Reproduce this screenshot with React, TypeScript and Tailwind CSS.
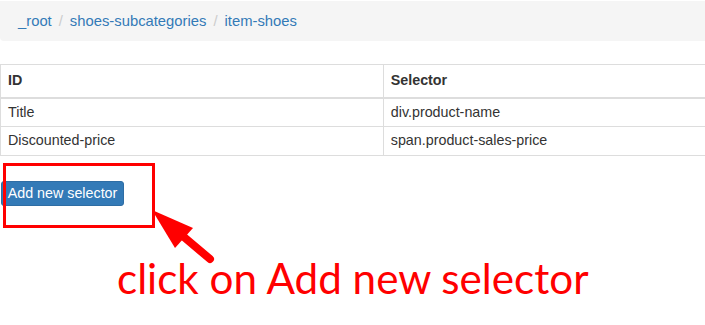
import React from 'react'

// ── Data ───────────────────────────────────────────────────────────────────────
const CRUMBS = ['_root', 'shoes-subcategories', 'item-shoes']

const ROWS = [
    { id: 'Title',            selector: 'div.product-name' },
    { id: 'Discounted-price', selector: 'span.product-sales-price' },
]

// ── Annotation arrow ───────────────────────────────────────────────────────────
function Arrow() {
    return (
        <svg className="absolute left-[140px] top-[200px]" width="80" height="70" viewBox="0 0 80 70">
            <polygon points="12,10 53,28 35,48" fill="#ff0000" />
            <line x1="38" y1="32" x2="70" y2="59" stroke="#ff0000" strokeWidth="8" strokeLinecap="round" />
        </svg>
    )
}

// ── Component ──────────────────────────────────────────────────────────────────
export default function App() {
    return (
        <div className="relative w-[705px] h-[325px] overflow-hidden bg-white font-['Liberation_Sans',Arial,sans-serif] text-[14.3px] text-[#333]">

            {/* Breadcrumb */}
            <div className="w-[760px] h-[40px] mt-px flex items-center pl-[18px] bg-[#f5f5f5] rounded-bl-[4px] text-[14.8px]">
                {CRUMBS.map((c, i) => (
                    <span key={c} className="flex items-center">
                        {i > 0 && <span className="px-[7px] text-[#ccc]">/</span>}
                        <span className="text-[#337ab7]">{c}</span>
                    </span>
                ))}
            </div>

            {/* Table */}
            <table className="mt-[23px] w-[766px] table-fixed border-collapse">
                <thead>
                    <tr className="h-[33px] border-t border-b-2 border-[#ddd]">
                        <th className="border-l border-[#ddd] px-[7px] text-left font-bold">ID</th>
                        <th className="border-l border-[#ddd] px-[7px] text-left font-bold">Selector</th>
                    </tr>
                </thead>
                <tbody>
                    {ROWS.map((r) => (
                        <tr key={r.id} className="h-[29px] border-b border-[#ddd]">
                            <td className="border-l border-[#ddd] px-[7px]">{r.id}</td>
                            <td className="border-l border-[#ddd] px-[7px]">{r.selector}</td>
                        </tr>
                    ))}
                </tbody>
            </table>

            {/* Button */}
            <div className="mt-[25px] pl-px">
                <button className="h-[25px] w-[123px] rounded-[3px] bg-[#337ab7] border border-[#2e6da4] text-white text-[14.3px] leading-none">
                    Add new selector
                </button>
            </div>

            {/* Annotations */}
            <div className="absolute left-[3px] top-[163px] w-[152px] h-[65px] border-[3px] border-[#ff0000]" />
            <Arrow />
            <p className="absolute left-[117px] top-[257px] font-['Lato',sans-serif] text-[42.2px] leading-none text-[#ff0000]">
                click on Add new selector
            </p>
        </div>
    )
}
